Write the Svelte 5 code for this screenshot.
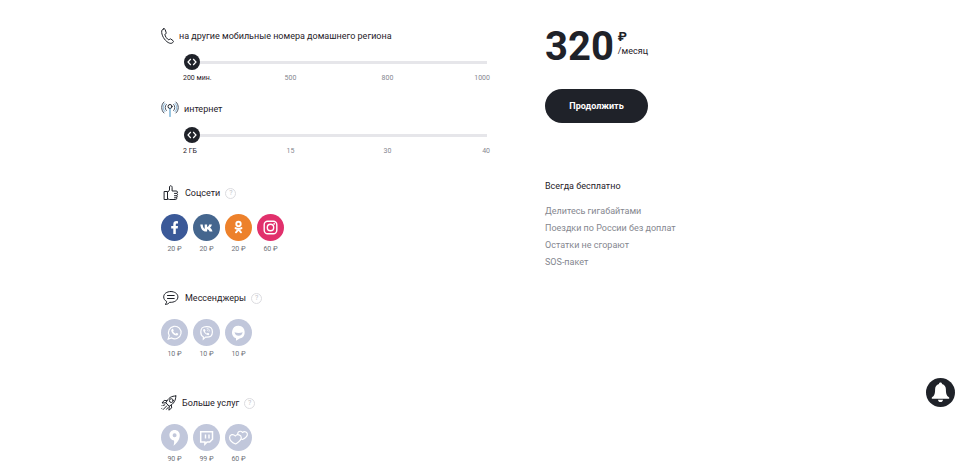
<script>
  let minutes = $state(0);
  let gigabytes = $state(0);

  const sliders = [
    { id: 'minutes', icon: 'phone', title: 'на другие мобильные номера домашнего региона', marks: ['200 мин.', '500', '800', '1000'] },
    { id: 'internet', icon: 'antenna', title: 'интернет', marks: ['2 ГБ', '15', '30', '40'] }
  ];

  let groups = $state([
    {
      icon: 'like',
      title: 'Соцсети',
      items: [
        { name: 'Facebook', icon: 'facebook', price: 20, color: '#3b5998', on: true },
        { name: 'ВКонтакте', icon: 'vk', price: 20, color: '#45668e', on: true },
        { name: 'Одноклассники', icon: 'ok', price: 20, color: '#ed812b', on: true },
        { name: 'Instagram', icon: 'instagram', price: 60, color: '#e1306c', on: true }
      ]
    },
    {
      icon: 'chat',
      title: 'Мессенджеры',
      items: [
        { name: 'WhatsApp', icon: 'whatsapp', price: 10, color: '#43d854', on: false },
        { name: 'Viber', icon: 'viber', price: 10, color: '#7d3daf', on: false },
        { name: 'ТамТам', icon: 'tamtam', price: 10, color: '#2f8cff', on: false }
      ]
    },
    {
      icon: 'rocket',
      title: 'Больше услуг',
      items: [
        { name: 'Где дети', icon: 'pin', price: 90, color: '#e1306c', on: false },
        { name: 'Twitch', icon: 'twitch', price: 99, color: '#6441a5', on: false },
        { name: 'Знакомства', icon: 'hearts', price: 60, color: '#ed812b', on: false }
      ]
    }
  ]);

  const perks = ['Делитесь гигабайтами', 'Поездки по России без доплат', 'Остатки не сгорают', 'SOS-пакет'];
</script>

{#snippet titleIcon(name)}
  {#if name === 'phone'}
    <svg class="line" width="13" height="16" viewBox="0 0 13 16" aria-hidden="true">
      <path d="M2.700.8C1.200 1.200.5 2.400.7 4.400c.4 4.400 4 9.500 8 10.800 1.600.5 3-.1 3.700-1.500.2-.4.1-.7-.3-1L9.800 11c-.4-.3-.8-.2-1.100.1l-.8.9C5.900 11 4.200 8.500 3.800 6.400l1-.6c.4-.2.5-.6.4-1L4.100 1.400C3.900.8 3.300.6 2.700.8z" />
    </svg>
  {:else if name === 'antenna'}
    <svg class="line" width="18" height="16" viewBox="0 0 18 16" aria-hidden="true">
      <g stroke="#46505f">
        <path d="M3 1C-.1 3.500-.1 9.500 3 12M14.900 1c3.200 2.500 3.200 8.500 0 11" />
        <path d="M5.300 3.500c-1.500 1.500-1.500 4.500 0 6M12.700 3.500c1.500 1.500 1.500 4.500 0 6" />
      </g>
      <path d="M4 2.400c-2.300 2-2.300 6.200 0 8.200M14 2.400c2.300 2 2.300 6.200 0 8.200" stroke="#7fb2d8" />
      <circle cx="9" cy="5.500" r="2" />
      <path d="M9 7.500v8" stroke="#3b8fc4" />
    </svg>
  {:else if name === 'like'}
    <svg class="line" width="19" height="16" viewBox="0 0 19 16" aria-hidden="true">
      <path d="M3.500 6.500h3v8h-3zM6.500 7.500l2-2.500V2c0-1.800 2.600-1.600 2.600.3V6h4.100c1.700 0 1.700 2.200.3 2.400 1.500.3 1.300 2.200 0 2.300 1.200.3 1 2-.3 2.100 1 .4.600 1.700-.6 1.700H8.500l-2-.8M13.500 8.400h1.800M13.500 10.700h1.800M13.500 12.800h1.300" />
    </svg>
  {:else if name === 'chat'}
    <svg class="line" width="19" height="16" viewBox="0 0 19 16" aria-hidden="true">
      <path d="M9.700 1.500c-4 0-7 2.300-7 5.400 0 2 1.100 3.600 2.900 4.500.1 1.200-.4 2.200-1.400 3 2 0 3.400-.7 4.400-2.100 4.700.4 8.300-2 8.300-5.400 0-3.100-3.100-5.400-7.200-5.400z" />
      <path d="M6.500 5.500h6.700M6.500 8.500h6.700" />
    </svg>
  {:else}
    <svg class="line" width="16" height="16" viewBox="0 0 16 16" aria-hidden="true">
      <path d="M14.800 1C10.500.9 7.500 2.700 4.800 7.800l3.500 3.400c4.500-2.400 6.600-5.800 6.500-10.200zM5.900 5.700 3.200 5.400 1 8l3.800-.2M10.300 10l.4 2.900-2.800 2.300.4-4M3.800 9.800l-1.600.6M5.800 10.800l-3.600 3.700M6.900 12.600l-1.400 1.700M.9 10.600l-.2.200M1 13.200l-.2.200" />
      <circle cx="10.300" cy="5.600" r="1.900" />
    </svg>
  {/if}
{/snippet}

{#snippet serviceIcon(name)}
  <svg width="27" height="27" viewBox="0 0 27 27" aria-hidden="true">
    {#if name === 'facebook'}
      <path fill="#fff" d="M12.300 20v-5.600h-2.100v-2.400h2.100v-1.600c0-2.200 1.200-3.300 3.200-3.300l1.500.1v2.200h-1c-.9 0-1.200.4-1.200 1.200V12H17l-.3 2.400h-1.900V20z" />
    {:else if name === 'vk'}
      <path fill="#fff" d="M13 17.500c-3.200 0-5.200-2.600-5.700-7h2.400c.2 2.500 1 3.900 2 4.400v-4.400h2.400v2.600c1-.2 1.700-1.200 2.100-2.600h2.700c-.3 1.500-1.100 2.600-2 3.300 1.100.6 2 1.600 2.600 3.700h-2.900c-.4-1.200-1.200-2.100-2.500-2.300v2.300z" />
    {:else if name === 'ok'}
      <g fill="none" stroke="#fff" stroke-width="1.900" stroke-linecap="round">
        <circle cx="13.500" cy="10" r="2.200" />
        <path d="M10.500 14.100c1.900 1.200 4.100 1.200 6 0M13.500 15.300l-2.500 3M13.500 15.300l2.500 3" />
      </g>
    {:else if name === 'instagram'}
      <g fill="none" stroke="#fff" stroke-width="1.400">
        <rect x="7.200" y="7.200" width="12.600" height="12.600" rx="3.500" />
        <circle cx="13.500" cy="13.500" r="3.200" />
      </g>
      <circle cx="17.200" cy="9.800" r=".9" fill="#fff" />
    {:else if name === 'whatsapp'}
      <path fill="none" stroke="#fff" stroke-width="1.200" d="M7.200 20l1-3.500a6.300 6.300 0 1 1 2.400 2.500z" />
      <path fill="#fff" d="M11.200 10c.4-.3.800-.2 1 .2l.5 1.300c.1.300-.4.800-.6 1 .6 1.100 1.400 1.800 2.500 2.300l.9-.9c.3-.1 1.500.6 1.700.8.200 1.100-.9 2-2 1.900-2.500-.3-4.800-2.700-5-4.800 0-.8.500-1.500 1-1.800z" />
    {:else if name === 'viber'}
      <path fill="none" stroke="#fff" stroke-width="1.200" d="M13.500 7.700c-4.200 0-5.700 1.300-5.700 5.400 0 2.600.7 4 2.500 4.700v2.400l2.200-2.100c5 .3 6.900-.9 6.900-5 0-4.100-1.600-5.400-5.900-5.400z" />
      <path fill="#fff" d="M11.100 10c.6-.2 1.300 1 1.400 1.400.1.400-.6.700-.5 1 .3 1 1 1.600 1.900 2 .4.100.6-.7 1-.6.500.1 1.600.9 1.400 1.400-.3.800-1 1.200-1.700.9-2.300-1-4-2.600-4.500-4.800-.1-.6.400-1.100 1-1.300z" />
      <path fill="none" stroke="#fff" stroke-width=".7" d="M13.700 9.500c2 0 3 1.100 3 3M13.900 11c.9 0 1.400.5 1.400 1.400" />
    {:else if name === 'tamtam'}
      <path fill="#fff" fill-rule="evenodd" d="M13.700 6.800a6.500 6.500 0 0 1 1 12.800L11 21.700v-2.400A6.500 6.500 0 0 1 13.700 6.800zM9.500 13.200c.6 2.400 2 3.500 4.100 3.500s3.500-1.100 4.100-3.500c-2.600.9-5.500.9-8.200 0z" />
    {:else if name === 'pin'}
      <path fill="#fff" fill-rule="evenodd" d="M13.600 6c3 0 5.200 2.200 5.200 5.200 0 4.200-2.600 7.600-6.300 10.500.6-2 .8-3.700.5-5.200-2.600-.3-4.600-2.500-4.600-5.300 0-3 2.200-5.200 5.200-5.200zm0 3.300a2 2 0 1 0 0 4 2 2 0 0 0 0-4z" />
    {:else if name === 'twitch'}
      <path fill="none" stroke="#fff" stroke-width="1.500" d="M7.700 7.700h11.800v7.600l-2.800 2.700h-2.600l-2.200 2.200V18H7.700z" />
      <path stroke="#fff" stroke-width="1.400" d="M12.500 10.500v4M16 10.500v4" />
    {:else}
      <path fill="none" stroke="#fff" stroke-width="1.200" stroke-linejoin="round" d="M10.600 20c-3.400-1.500-6-3.400-6-6.600 0-3 3.800-3.800 5.700-1.400 1.900-2.400 6-1.200 6 1.800 0 2.700-2.900 4.300-5.700 6.200zM12.800 10.500c-.6-3.100 2.900-4.300 4.700-2 2.200-2 5.500-.1 4.800 2.700-.5 2-2.300 3.200-4.800 4.300l-1.300-.5" />
    {/if}
  </svg>
{/snippet}

<main class="page">
  <div class="options">
    {#each sliders as slider}
      <section class="slider">
        <label class="title" for={slider.id}>
          {@render titleIcon(slider.icon)}
          <span>{slider.title}</span>
        </label>
        {#if slider.id === 'minutes'}
          <input id={slider.id} type="range" min="0" max="3" bind:value={minutes} />
        {:else}
          <input id={slider.id} type="range" min="0" max="3" bind:value={gigabytes} />
        {/if}
        <div class="marks">
          {#each slider.marks as mark, i}
            <span class:current={i === (slider.id === 'minutes' ? minutes : gigabytes)}>{mark}</span>
          {/each}
        </div>
      </section>
    {/each}

    {#each groups as group}
      <section class="group">
        <h2 class="title">
          {@render titleIcon(group.icon)}
          <span>{group.title}</span>
          <button class="help" type="button">?</button>
        </h2>
        <ul class="services">
          {#each group.items as item}
            <li>
              <button
                class="service"
                type="button"
                aria-label={item.name}
                aria-pressed={item.on}
                style:background-color={item.on ? item.color : null}
                onclick={() => (item.on = !item.on)}
              >
                {@render serviceIcon(item.icon)}
              </button>
              <span>{item.price} ₽</span>
            </li>
          {/each}
        </ul>
      </section>
    {/each}
  </div>

  <aside class="summary">
    <div class="price">
      <strong>320</strong>
      <div class="unit"><b>₽</b><span>/месяц</span></div>
    </div>
    <button class="continue" type="button">Продолжить</button>
    <h2>Всегда бесплатно</h2>
    <ul class="perks">
      {#each perks as perk}
        <li>{perk}</li>
      {/each}
    </ul>
  </aside>
</main>

<button class="bell" type="button" aria-label="Уведомления">
  <svg width="29" height="29" viewBox="0 0 29 29" aria-hidden="true">
    <path fill="#fff" d="M14.500 4.500c.9 0 1.500.6 1.500 1.400 2.600.7 3.900 2.600 3.900 5.300 0 4.700.8 6.700 3.300 8.200v1.300H5.800v-1.300c2.500-1.500 3.300-3.500 3.300-8.200 0-2.700 1.300-4.600 3.900-5.300 0-.8.600-1.400 1.500-1.400zM12 21.700h5c-.2 1.500-1.100 2.300-2.500 2.300s-2.300-.8-2.500-2.300z" />
  </svg>
</button>

<style>
  :global(body) {
    margin: 0;
    background: #fff;
  }

  .page,
  .bell {
    font-family: Roboto, 'Noto Sans', sans-serif;
  }

  .page {
    display: grid;
    grid-template-columns: 326fr 254fr;
    column-gap: 58px;
    max-width: 638px;
    margin: 0 auto;
    padding-top: 28px;
    color: #1f2229;
    font-size: 9px;
    line-height: 16px;
  }

  button {
    padding: 0;
    border: 0;
    font-family: inherit;
    cursor: pointer;
  }

  ul {
    margin: 0;
    padding: 0;
    list-style: none;
  }

  h2 {
    margin: 0;
    font-size: 9px;
    font-weight: 400;
  }

  .title {
    display: flex;
    align-items: center;
    gap: 5px;
    height: 16px;
  }

  .line {
    flex: none;
    fill: none;
    stroke: #1f2229;
    stroke-width: 1;
    stroke-linejoin: round;
    stroke-linecap: round;
  }

  .slider {
    margin-bottom: 17px;
  }

  .slider input {
    display: block;
    box-sizing: border-box;
    width: calc(100% - 23px);
    height: 16px;
    margin: 10px 0 0 23px;
    appearance: none;
    background: linear-gradient(#e6e6ea, #e6e6ea) center / 100% 3px no-repeat;
    cursor: pointer;
  }

  .slider input::-webkit-slider-thumb {
    appearance: none;
    width: 16px;
    height: 16px;
    border-radius: 50%;
    background: #1f2229
      url("data:image/svg+xml,%3Csvg xmlns='http://www.w3.org/2000/svg' viewBox='0 0 16 16'%3E%3Cpath d='M6.800 5 4 8l2.800 3M9.200 5 12 8l-2.800 3' fill='none' stroke='white' stroke-width='1.200'/%3E%3C/svg%3E");
  }

  .marks {
    display: grid;
    grid-template-columns: 59fr 97fr 97fr 54fr;
    margin: 2px -3px 0 22px;
    color: #85878f;
    font-size: 7px;
    line-height: 12px;
    text-align: center;
    white-space: nowrap;
  }

  .marks span:first-child {
    text-align: left;
  }

  .marks span:last-child {
    text-align: right;
  }

  .marks .current {
    color: #1f2229;
  }

  .group {
    margin-bottom: 36px;
  }

  .slider + .group {
    margin-top: 28px;
  }

  .group:last-child {
    margin-bottom: 0;
  }

  .help {
    box-sizing: border-box;
    width: 11px;
    height: 11px;
    border: 1px solid #dcdce0;
    border-radius: 50%;
    background: none;
    color: #c4c5ca;
    font-size: 7px;
    line-height: 9px;
  }

  .services {
    display: flex;
    gap: 5px;
    margin-top: 13px;
  }

  .services li {
    display: flex;
    flex-direction: column;
    align-items: center;
    gap: 3px;
    width: 27px;
    color: #70727a;
    font-size: 7px;
    line-height: 10px;
    white-space: nowrap;
  }

  .service {
    width: 27px;
    height: 27px;
    border-radius: 50%;
    background: #c1c7db;
  }

  .service svg,
  .bell svg {
    display: block;
  }

  .price {
    display: flex;
    gap: 4px;
    height: 38px;
  }

  .price strong {
    font-size: 40px;
    line-height: 38px;
  }

  .unit {
    display: flex;
    flex-direction: column;
    padding-top: 1px;
    line-height: 15px;
  }

  .unit b {
    font-size: 13px;
  }

  .continue {
    display: block;
    width: 103px;
    height: 34px;
    margin: 23px 0 55px;
    border-radius: 17px;
    background: #1f2229;
    color: #fff;
    font-size: 9px;
    font-weight: 700;
  }

  .perks {
    margin-top: 9px;
    color: #85878f;
    line-height: 17px;
  }

  .bell {
    position: fixed;
    right: 5px;
    bottom: 56px;
    width: 29px;
    height: 29px;
    border-radius: 50%;
    background: #1f2229;
  }
</style>
